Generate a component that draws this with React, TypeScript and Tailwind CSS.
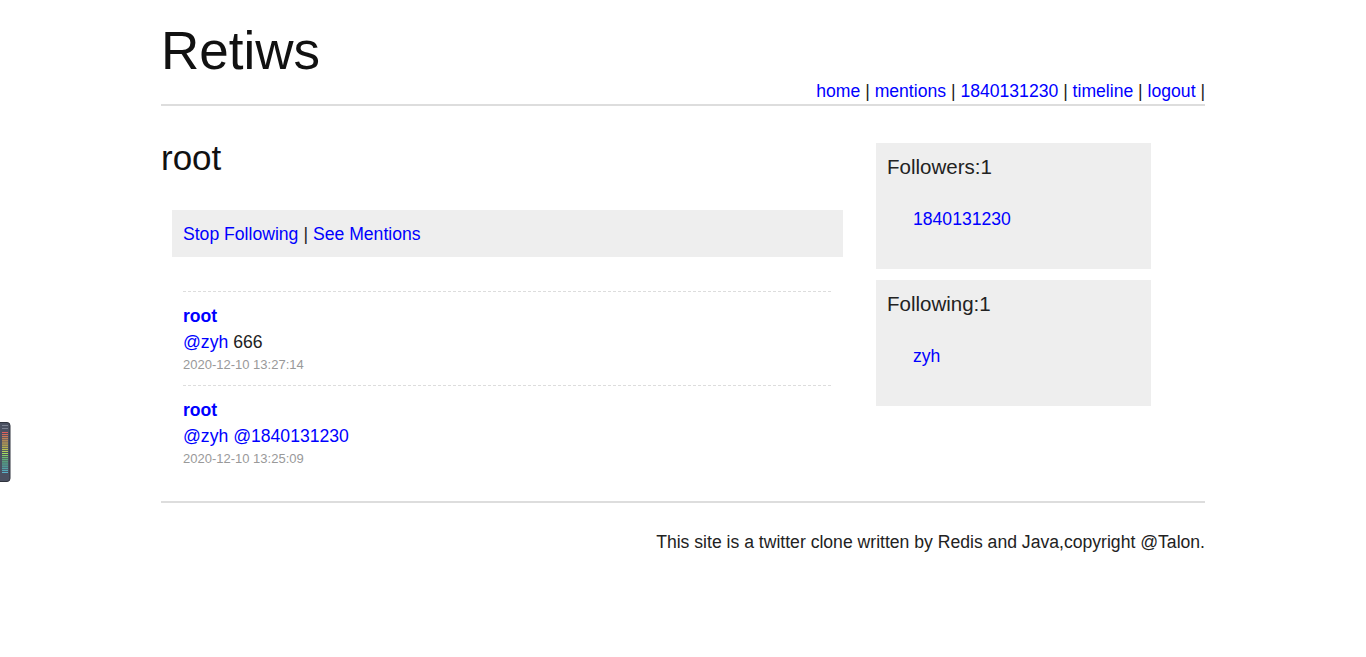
import React from "react";

interface Post {
  author: string;
  body: React.ReactNode;
  time: string;
}

const font = { fontFamily: '"Liberation Sans", Arial, sans-serif' };

const posts: Post[] = [
  {
    author: "root",
    body: (
      <>
        <a href="#" className="text-[#0000ff]">@zyh</a> 666
      </>
    ),
    time: "2020-12-10 13:27:14",
  },
  {
    author: "root",
    body: (
      <>
        <a href="#" className="text-[#0000ff]">@zyh</a>{" "}
        <a href="#" className="text-[#0000ff]">@1840131230</a>
      </>
    ),
    time: "2020-12-10 13:25:09",
  },
];

const navLinks = ["home", "mentions", "1840131230", "timeline", "logout"];

// the little rainbow tab some extension sticks on the left edge
function EdgeTab() {
  const stripes = Array.from({ length: 20 }, (_, i) => i);
  const colors = [
    "#e25d5d", "#e7705a", "#eb8557", "#ee9a55", "#f0ad52", "#f1c050", "#efcf4e", "#e6d84e",
    "#d4dd52", "#bedf58", "#a6df60", "#8fdc6a", "#7ad876", "#6ad384", "#60cf94", "#5acba4",
    "#58c7b3", "#58c3c0", "#5abfcb", "#5dbbd3",
  ];
  return (
    <div className="absolute left-0 top-[422px]">
      <svg width="11" height="60" viewBox="0 0 11 60">
        <rect x="-4" y="0.5" width="14" height="59" rx="3" fill="#4b5161" stroke="#2f333d" />
        <rect x="2" y="3" width="6" height="1" fill="#7c8291" />
        <rect x="2" y="6" width="6" height="1" fill="#7c8291" />
        {stripes.map((i) => (
          <rect key={i} x="2" y={10 + i * 2.1} width="6" height="1" fill={colors[i]} />
        ))}
      </svg>
    </div>
  );
}

function SideBox({ title, name }: { title: string; name: string }) {
  return (
    <div className="bg-[#eeeeee] h-[126px] pt-[12px] pl-[11px]">
      <h3 className="text-[20.5px] leading-[24px] text-[#222]">{title}</h3>
      <ul className="mt-[29px] pl-[26px]">
        <li className="text-[17.6px] leading-[22px]">
          <a href="#" className="text-[#0000ff]">{name}</a>
        </li>
      </ul>
    </div>
  );
}

export default function App() {
  return (
    <div className="relative min-h-[657px] bg-white text-[#222]" style={font}>
      <EdgeTab />
      <div className="w-[1044px] mx-auto">
        {/* Header */}
        <div className="pt-[22px] pb-[2px] border-b-2 border-[#dddddd]">
          <h1 className="text-[53px] leading-[58px] text-[#111]">Retiws</h1>
          <div className="text-right text-[17.6px] leading-[22px]">
            {navLinks.map((l) => (
              <span key={l}>
                <a href="#" className="text-[#0000ff]">{l}</a> |{" "}
              </span>
            ))}
          </div>
        </div>

        {/* Main */}
        <div className="flex">
          <div className="w-[682px] pt-[32px]">
            <h2 className="text-[35px] leading-[40px] text-[#111]">root</h2>
            <div className="ml-[11px] mt-[32px] h-[47px] bg-[#eeeeee] flex items-center px-[11px] text-[17.6px] leading-[22px]">
              <a href="#" className="text-[#0000ff]">Stop Following</a>
              <span className="px-[5px]">|</span>
              <a href="#" className="text-[#0000ff]">See Mentions</a>
            </div>
            <div className="pl-[22px] pr-[12px] mt-[34px]">
              {posts.map((p, i) => (
                <div key={i} className="border-t border-dashed border-[#dddddd] pt-[11px] pb-[12px]">
                  <div className="text-[17.6px] leading-[26px] font-bold">
                    <a href="#" className="text-[#0000ff]">{p.author}</a>
                  </div>
                  <div className="text-[17.6px] leading-[26px]">{p.body}</div>
                  <div className="mt-[2px] text-[13px] leading-[16px] text-[#999999]">{p.time}</div>
                </div>
              ))}
            </div>
          </div>

          <div className="w-[275px] ml-[33px] pt-[37px] flex flex-col gap-[11px]">
            <SideBox title="Followers:1" name="1840131230" />
            <SideBox title="Following:1" name="zyh" />
          </div>
        </div>

        {/* Footer */}
        <div className="mt-[22px] border-t-2 border-[#dddddd] pt-[28px] text-right text-[17.6px] leading-[22px]">
          This site is a twitter clone written by Redis and Java,copyright @Talon.
        </div>
      </div>
    </div>
  );
}
